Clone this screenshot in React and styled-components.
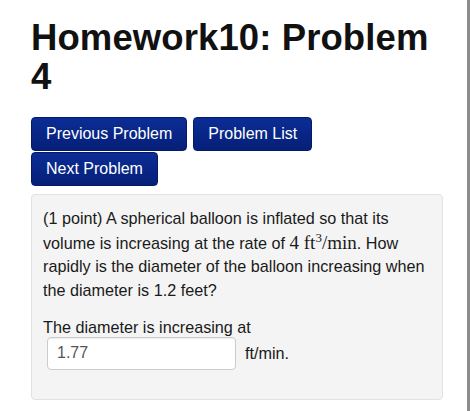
import styled, { createGlobalStyle } from "styled-components";

const Global = createGlobalStyle`
  html, body {
    margin: 0;
    padding: 0;
    background: #fff;
  }
  body {
    font-family: "Liberation Sans", Arial, sans-serif;
    color: #222;
  }
`;

function App() {
  return (
    <Page>
      <Global />
      <Main>
        <Title>Homework10: Problem 4</Title>
        <Nav>
          <NavButton>Previous Problem</NavButton>
          <NavButton>Problem List</NavButton>
          <NavButton>Next Problem</NavButton>
        </Nav>
        <Well>
          <Para>
            (1 point) A spherical balloon is inflated so that its volume is
            increasing at the rate of <Math>4 ft<sup>3</sup>/min</Math>. How
            rapidly is the diameter of the balloon increasing when the diameter
            is 1.2 feet?
          </Para>
          <Label>The diameter is increasing at</Label>
          <AnswerRow>
            <Answer defaultValue="1.77" />
            <Unit>ft/min.</Unit>
          </AnswerRow>
        </Well>
      </Main>
      <Edge />
    </Page>
  );
}

const Page = styled.div`
  display: flex;
  width: 474px;
  height: 411px;
  overflow: hidden;
`;
const Main = styled.div`
  width: 467px;
  padding: 0 24px 0 31px;
  box-sizing: border-box;
`;
const Edge = styled.div`
  width: 3px;
  background: #8c8c8c;
  border-right: 4px solid #fff;
`;
const Title = styled.h1`
  margin: 18px 0 0;
  font-size: 36.5px;
  line-height: 39px;
  font-weight: bold;
  color: #111;
  letter-spacing: 0.1px;
`;
const Nav = styled.div`
  display: flex;
  flex-wrap: wrap;
  gap: 1px 6px;
  margin-top: 21px;
  width: 290px;
`;
const NavButton = styled.button`
  height: 34px;
  padding: 0 14px;
  font-family: "Liberation Sans", Arial, sans-serif;
  font-size: 16px;
  color: #fff;
  background: linear-gradient(#0b2d95, #061f78);
  border: 1px solid #041a66;
  border-radius: 4px;
`;
const Well = styled.div`
  margin-top: 8px;
  width: 412px;
  height: 206px;
  box-sizing: border-box;
  padding: 12px 11px;
  background: #f4f4f4;
  border: 1px solid #e2e2e2;
  border-radius: 4px;
`;
const Para = styled.p`
  margin: 0;
  font-size: 16.2px;
  line-height: 23.7px;
  color: #1a1a1a;
`;
const Math = styled.span`
  font-family: "Liberation Serif", "Times New Roman", serif;
  font-size: 19px;
  sup {
    font-size: 13px;
    line-height: 0;
  }
`;
const Label = styled.div`
  margin-top: 12px;
  font-size: 16.2px;
  line-height: 24px;
  color: #1a1a1a;
`;
const AnswerRow = styled.div`
  display: flex;
  align-items: center;
  gap: 9px;
  margin: -2px 0 0 4px;
`;
const Answer = styled.input`
  width: 189px;
  height: 33px;
  box-sizing: border-box;
  padding: 0 9px;
  font-family: "Liberation Sans", Arial, sans-serif;
  font-size: 16px;
  color: #555;
  background: #fff;
  border: 1px solid #ccc;
  border-radius: 4px;
  box-shadow: inset 0 1px 1px rgba(0, 0, 0, 0.075);
`;
const Unit = styled.span`
  font-size: 16.2px;
  color: #1a1a1a;
`;

export default App;
